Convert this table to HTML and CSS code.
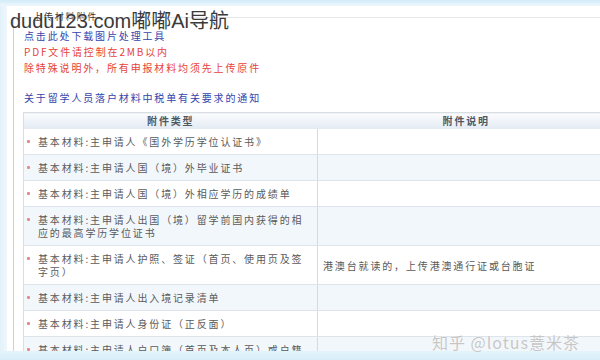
FILE: index.html
```html
<!DOCTYPE html>
<html lang="zh-CN">
<head>
<meta charset="utf-8">
<title>附件上传</title>
<link rel="stylesheet" href="styles.css">
</head>
<body>
<div class="topband"></div>
<div class="main">
  <div class="leftband"></div>
  <div class="panel">
    <div class="titlebar"><span class="title">上传材料附件</span></div>
    <div class="box">
      <div class="links">
        <p class="blue">点击此处下载图片处理工具</p>
        <p class="red">PDF文件请控制在2MB以内</p>
        <p class="red">除特殊说明外，所有申报材料均须先上传原件</p>
        <p class="blue notice">关于留学人员落户材料中税单有关要求的通知</p>
      </div>
      <table class="files">
        <colgroup><col class="c1"><col class="c2"></colgroup>
        <thead>
          <tr><th>附件类型</th><th>附件说明</th></tr>
        </thead>
        <tbody>
          <tr><td><div class="item"><span class="dot"></span><span>基本材料:主申请人《国外学历学位认证书》</span></div></td><td></td></tr>
          <tr class="alt"><td><div class="item"><span class="dot"></span><span>基本材料:主申请人国（境）外毕业证书</span></div></td><td></td></tr>
          <tr><td><div class="item"><span class="dot"></span><span>基本材料:主申请人国（境）外相应学历的成绩单</span></div></td><td></td></tr>
          <tr class="alt"><td><div class="item"><span class="dot"></span><span>基本材料:主申请人出国（境）留学前国内获得的相应的最高学历学位证书</span></div></td><td></td></tr>
          <tr><td><div class="item"><span class="dot"></span><span>基本材料:主申请人护照、签证（首页、使用页及签字页）</span></div></td><td class="desc">港澳台就读的，上传港澳通行证或台胞证</td></tr>
          <tr class="alt"><td><div class="item"><span class="dot"></span><span>基本材料:主申请人出入境记录清单</span></div></td><td></td></tr>
          <tr><td><div class="item"><span class="dot"></span><span>基本材料:主申请人身份证（正反面）</span></div></td><td></td></tr>
          <tr class="alt"><td><div class="item"><span class="dot"></span><span>基本材料:主申请人户口簿（首页及本人页）或户籍证明</span></div></td><td></td></tr>
        </tbody>
      </table>
    </div>
  </div>
</div>
<div class="bottomband"></div>
<div class="wm-top">dudu123.com嘟嘟Ai导航</div>
<div class="wm-bottom">知乎 @lotus薏米茶</div>
</body>
</html>
```
FILE: styles.css
```css
html, body {
  margin: 0;
  padding: 0;
}
body {
  width: 600px;
  height: 360px;
  overflow: hidden;
  position: relative;
  background: #fff;
  font-family: "Noto Sans CJK SC", "Noto Sans", sans-serif;
  font-size: 10px;
  letter-spacing: 1.85px;
  color: #5a5a5a;
}
.topband {
  height: 6px;
  background: linear-gradient(#d2ebf8, #eef7fc);
}
.main {
  display: flex;
  height: 354px;
  overflow: hidden;
}
.leftband {
  width: 7px;
  flex: none;
  background: linear-gradient(90deg, #e3f1fa, #eef7fc);
}
.panel {
  flex: 1;
  padding-left: 6px;
  min-width: 0;
}
.titlebar {
  height: 5px;
  padding: 6px 0 0 20px;
  border-bottom: 1px solid #e4e6e8;
  font-size: 9px;
  line-height: 10px;
  color: #333;
  white-space: nowrap;
}
.box {
  border-left: 1px solid #cbd1d6;
  padding: 10px 0 0 9px;
  height: 400px;
}
.links {
  padding-left: 1px;
}
.links p {
  margin: 0;
  line-height: 16px;
  white-space: nowrap;
}
.blue { color: #3444ad; }
.red { color: #e6423a; }
.notice { margin-top: 14px !important; }
.files {
  margin-top: 6px;
  width: 592px;
  table-layout: fixed;
  border-collapse: collapse;
  border-left: 1px solid #d6dee6;
}
.c1 { width: 294px; }
.files th {
  height: 16px;
  padding: 0;
  font-weight: bold;
  color: #4f5862;
  line-height: 16px;
  border-top: 1px solid #d9dee3;
  background: linear-gradient(#fbfcfe, #e2eaf3);
}
.files td {
  padding: 6px 9px 6px 3px;
  line-height: 13px;
  border-bottom: 1px solid #dde4eb;
  vertical-align: middle;
}
.files td:first-child {
  border-right: 1px solid #cddbea;
}
.files td.desc {
  padding-left: 5px;
  white-space: nowrap;
}
.files tr.alt td {
  background: #f2f7fb;
}
.item {
  display: flex;
  align-items: flex-start;
}
.dot {
  flex: none;
  width: 3px;
  height: 3px;
  margin: 5px 8px 0 0;
  background: #e58a8a;
  border-radius: 1px;
}
.bottomband {
  position: absolute;
  left: 0;
  right: 0;
  bottom: 0;
  height: 9px;
  background: linear-gradient(#e4f3fb, #d6eef9);
}
.wm-top {
  position: absolute;
  left: 10px;
  top: 11px;
  font-family: "Liberation Sans", "Noto Sans CJK SC", sans-serif;
  font-size: 20px;
  line-height: 20px;
  letter-spacing: 0;
  color: #3a3a3a;
  white-space: nowrap;
  text-shadow: 0 0 2px #fff;
}
.wm-bottom {
  position: absolute;
  left: 432px;
  top: 332px;
  font-family: "Noto Sans CJK SC", sans-serif;
  font-size: 16px;
  line-height: 20px;
  letter-spacing: 1px;
  color: #c6c6c6;
  white-space: nowrap;
  text-shadow: 0 0 1px #fff, 0 0 1px #fff;
}
```
